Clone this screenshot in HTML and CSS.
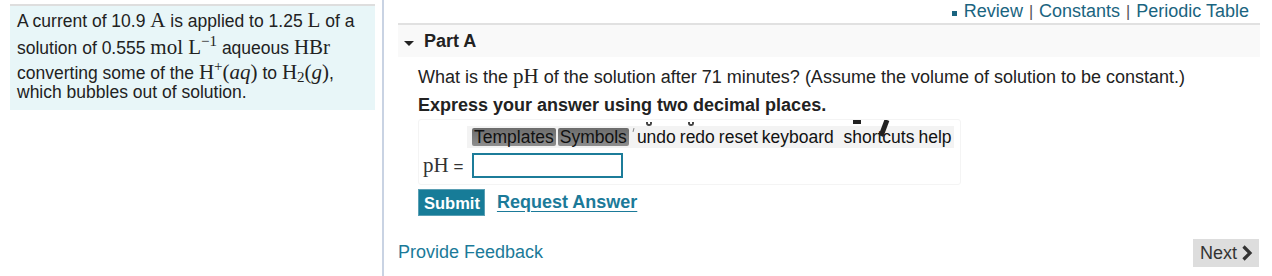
FILE: index.html
```
<!DOCTYPE html>
<html>
<head>
<meta charset="utf-8">
<link rel="stylesheet" href="styles.css">
</head>
<body>
<div class="page">
  <aside class="left">
    <div class="problem">
      <div class="pl l1">A current of 10.9 <span class="m">A</span> is applied to 1.25 <span class="m">L</span> of a</div>
      <div class="pl l2">solution of 0.555 <span class="m">mol L<sup>&minus;1</sup></span> aqueous <span class="m">HBr</span></div>
      <div class="pl l3">converting some of the <span class="m">H<sup>+</sup>(<i>aq</i>)</span> to <span class="m">H<sub>2</sub>(<i>g</i>)</span>,</div>
      <div class="pl l4">which bubbles out of solution.</div>
    </div>
  </aside>
  <main class="right">
    <div class="toplinks">
      <span class="bullet"></span><a class="tl">Review</a><span class="sep">|</span><a class="tl">Constants</a><span class="sep">|</span><a class="tl">Periodic Table</a>
    </div>
    <div class="parthead"><span class="caret"></span>Part A</div>
    <div class="partbody">
      <p class="question">What is the <span class="m">pH</span> of the solution after 71 minutes? (Assume the volume of solution to be constant.)</p>
      <p class="instr">Express your answer using two decimal places.</p>
      <div class="answer">
        <div class="toolbar">
          <span class="tbtn">Templates</span><span class="tbtn">Symbols</span>
          <span class="tlink first">undo</span><span class="tlink">redo</span><span class="tlink">reset</span><span class="tlink">keyboard&nbsp; shortcuts</span><span class="tlink">help</span>
          <span class="frag f-tick"></span>
          <span class="frag f-breve1"></span>
          <span class="frag f-breve2"></span>
          <span class="frag f-rect"></span>
          <svg class="frag f-slash" width="18" height="18" viewBox="0 0 18 18"><path d="M15 0 L9 16" stroke="#222" stroke-width="5" fill="none"/></svg>
        </div>
        <div class="field">
          <span class="lbl"><span class="m">pH</span> =</span>
          <span class="input"></span>
        </div>
      </div>
      <div class="actions">
        <span class="submit">Submit</span>
        <a class="request">Request Answer</a>
      </div>
    </div>
    <div class="footer">
      <a class="feedback">Provide Feedback</a>
      <span class="next">Next <svg width="12" height="16" viewBox="0 0 12 16"><path d="M2.5 1.5 L9 8 L2.5 14.5" fill="none" stroke="#333" stroke-width="3.2"/></svg></span>
    </div>
  </main>
</div>
</body>
</html>
```
FILE: styles.css
```
html, body {
  margin: 0;
  padding: 0;
  background: #fff;
}
body {
  font-family: "Liberation Sans", Arial, sans-serif;
  color: #222;
  width: 1272px;
  height: 276px;
  overflow: hidden;
}
.page {
  display: flex;
  height: 276px;
}
.left {
  width: 372px;
  padding: 4px 0 0 10px;
  border-right: 2px solid #c9d3e3;
}
.problem {
  border-top: 2px solid #dedede;
  background: #e8f6f8;
  padding: 0 0 10px 7px;
  width: 358px;
  font-size: 17.5px;
  color: #222;
}
.pl {
  white-space: nowrap;
}
.l1 { height: 28px; line-height: 29px; }
.l2 { height: 25px; line-height: 26px; }
.l3 { height: 24px; line-height: 26px; }
.l4 { height: 17px; line-height: 18px; }
.m {
  font-family: "Liberation Serif", "DejaVu Serif", serif;
  font-size: 21px;
}
.m i {
  font-style: italic;
}
sup {
  font-size: 15px;
  line-height: 0;
  vertical-align: 8px;
}
sub {
  font-size: 15px;
  line-height: 0;
  vertical-align: -3px;
}
.right {
  flex: 1;
  padding: 0 12px 0 14px;
}
.toplinks {
  height: 23px;
  text-align: right;
  font-size: 18px;
  line-height: 23px;
  color: #1a6480;
  padding-right: 11px;
  border-bottom: 2px solid #e1e1e1;
}
.bullet {
  display: inline-block;
  width: 5px;
  height: 5px;
  background: #1a6480;
  margin-right: 7px;
  vertical-align: 1px;
}
.sep {
  color: #555;
  font-size: 16px;
  margin: 0 6px;
}
.parthead {
  background: #f9f9f9;
  height: 32px;
  font-size: 18px;
  font-weight: bold;
  color: #222;
  padding-left: 6px;
  display: flex;
  align-items: center;
  padding-top: 1px;
  box-sizing: border-box;
}
.caret {
  display: inline-block;
  width: 0;
  height: 0;
  border-left: 5px solid transparent;
  border-right: 5px solid transparent;
  border-top: 5px solid #222;
  margin-right: 10px;
  margin-top: 4px;
}
.partbody {
  padding-left: 20px;
}
.question {
  margin: 9px 0 0;
  font-size: 18px;
  line-height: 20px;
}
.question .m {
  font-size: 21px;
}
.instr {
  margin: 8px 0 0;
  font-size: 18px;
  font-weight: bold;
  line-height: 20px;
}
.answer {
  margin-top: 4px;
  width: 541px;
  padding: 6px 0 6px 0;
  border: 1px solid #f4f4f4;
  border-radius: 3px;
}
.toolbar {
  position: relative;
  margin-left: 48px;
  width: 487px;
  height: 22px;
  background: #f3f3f3;
  display: flex;
  align-items: center;
  padding-left: 5px;
  box-sizing: border-box;
  font-size: 17.5px;
  white-space: nowrap;
}
.tbtn, .tlink {
  flex-shrink: 0;
}
.tbtn {
  background: linear-gradient(#6c6c6c, #8e8e8e);
  color: #111;
  border-radius: 2px;
  padding: 0 2px;
  height: 18px;
  line-height: 19px;
  margin-right: 2px;
}
.tlink {
  color: #111;
  margin-left: 4px;
}
.tlink.first {
  margin-left: 6px;
}
.frag {
  position: absolute;
}
.f-tick {
  left: 166px;
  top: 2px;
  width: 1px;
  height: 4px;
  background: #888;
  transform: rotate(15deg);
}
.f-breve1, .f-breve2 {
  top: -4px;
  width: 6px;
  height: 4px;
  border: 2px solid #444;
  border-top: none;
  border-radius: 0 0 5px 5px;
  box-sizing: border-box;
}
.f-breve1 { left: 179px; }
.f-breve2 { left: 221px; }
.f-rect {
  left: 386px;
  top: -6px;
  width: 8px;
  height: 4px;
  background: #222;
}
.f-slash {
  left: 405px;
  top: -6px;
}
.field {
  display: flex;
  align-items: center;
  margin-top: 5px;
  padding-left: 4px;
}
.lbl {
  font-size: 17px;
  color: #333;
  margin-right: 9px;
}
.lbl .m {
  font-size: 21px;
}
.input {
  display: block;
  width: 147px;
  height: 21px;
  border: 2px solid #1c7c99;
}
.actions {
  display: flex;
  align-items: center;
  margin-top: 4px;
}
.submit {
  background: #177c98;
  color: #fff;
  font-weight: bold;
  font-size: 16.5px;
  height: 27px;
  line-height: 27px;
  padding: 0 4px 0 5px;
  border: 1px solid #5a9fb4;
  box-sizing: border-box;
}
.request {
  margin-left: 12px;
  font-weight: bold;
  font-size: 18px;
  color: #1b7a99;
  text-decoration: underline;
  text-underline-offset: 3px;
}
.footer {
  display: flex;
  justify-content: space-between;
  align-items: center;
  margin-top: 23px;
}
.feedback {
  font-size: 18px;
  color: #1b7a99;
  margin-top: -2px;
}
.next {
  background: #dddddd;
  height: 28px;
  padding: 0 6px 0 7px;
  font-size: 18px;
  color: #333;
  display: flex;
  align-items: center;
  gap: 4px;
  margin-right: 1px;
}
```
